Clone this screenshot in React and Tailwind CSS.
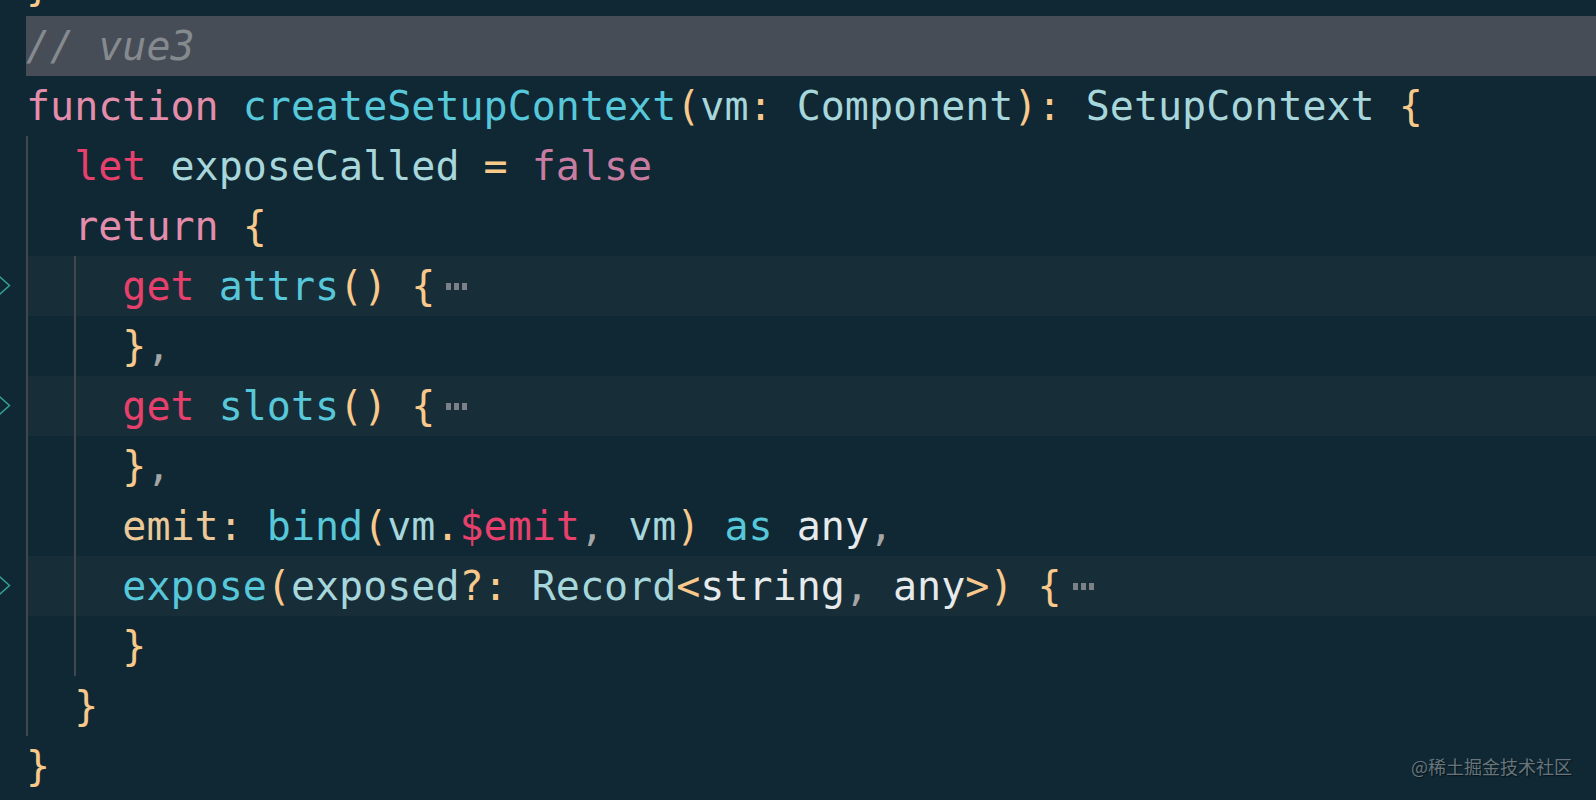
import React from 'react';

const C = {
  pink: 'text-[#e48dab]',
  red: 'text-[#e8406d]',
  mauve: 'text-[#c87c9f]',
  cyan: 'text-[#57c7da]',
  teal: 'text-[#a7d6db]',
  peach: 'text-[#f9c98c]',
  tan: 'text-[#ecc899]',
  white: 'text-[#e7eaeb]',
  grey: 'text-[#a3a5a7]',
  comment: 'text-[#858a8f] italic',
};

// each row: depth (indent guides), fold marker, row style, tokens
const rows = [
  { depth: 0, tokens: [['}', C.peach]] },
  { depth: 0, hl: true, tokens: [['// vue3', C.comment]] },
  {
    depth: 0,
    tokens: [
      ['function', C.pink], [' '], ['createSetupContext', C.cyan], ['(', C.peach], ['vm', C.teal],
      [':', C.peach], [' '], ['Component', C.teal], [')', C.peach], [':', C.peach], [' '],
      ['SetupContext', C.teal], [' '], ['{', C.peach],
    ],
  },
  { depth: 1, tokens: [['let', C.red], [' '], ['exposeCalled', C.teal], [' = ', C.peach], ['false', C.mauve]] },
  { depth: 1, tokens: [['return', C.pink], [' '], ['{', C.peach]] },
  { depth: 2, fold: true, tokens: [['get', C.red], [' '], ['attrs', C.cyan], ['()', C.peach], [' '], ['{', C.peach]] },
  { depth: 2, tokens: [['}', C.peach], [',', C.grey]] },
  { depth: 2, fold: true, tokens: [['get', C.red], [' '], ['slots', C.cyan], ['()', C.peach], [' '], ['{', C.peach]] },
  { depth: 2, tokens: [['}', C.peach], [',', C.grey]] },
  {
    depth: 2,
    tokens: [
      ['emit:', C.tan], [' '], ['bind', C.cyan], ['(', C.peach], ['vm', C.teal], ['.', C.peach],
      ['$emit', C.red], [',', C.grey], [' '], ['vm', C.teal], [')', C.peach], [' '], ['as', C.cyan],
      [' '], ['any', C.white], [',', C.grey],
    ],
  },
  {
    depth: 2,
    fold: true,
    tokens: [
      ['expose', C.cyan], ['(', C.peach], ['exposed', C.teal], ['?:', C.peach], [' '], ['Record', C.teal],
      ['<', C.peach], ['string', C.white], [',', C.grey], [' '], ['any', C.white], ['>', C.peach],
      [')', C.peach], [' '], ['{', C.peach],
    ],
  },
  { depth: 2, tokens: [['}', C.peach]] },
  { depth: 1, tokens: [['}', C.peach]] },
  { depth: 0, tokens: [['}', C.peach]], mark: true },
];

const Chevron = () => (
  <svg width="26" height="60" viewBox="0 0 26 60" className="block">
    <polyline points="-1,20 9.5,29.5 -1,39" fill="none" stroke="#35a092" strokeWidth="1.5" />
  </svg>
);

const Dots = () => (
  <span className="ml-[11px] flex gap-[3px] self-center">
    <span className="w-[5px] h-[7px] bg-[#7c8187]" />
    <span className="w-[5px] h-[7px] bg-[#7c8187]" />
    <span className="w-[5px] h-[7px] bg-[#7c8187]" />
  </span>
);

export default function App() {
  return (
    <div className="w-[1596px] h-[800px] overflow-hidden bg-[#0f2834] font-['DejaVu_Sans_Mono','Liberation_Mono',monospace] text-[40px]">
      <div className="mt-[-44px] flex flex-col">
        {rows.map((row, i) => (
          <div key={i} className="flex h-[60px] leading-[60px]">
            {/* gutter */}
            <div className="w-[26px] shrink-0">{row.fold && <Chevron />}</div>

            <div
              className={`flex flex-1 items-stretch whitespace-pre ${
                row.hl ? 'bg-[#474d57]' : row.fold ? 'bg-[#172d38]' : ''
              }`}
            >
              {Array.from({ length: row.depth }).map((_, d) => (
                <span key={d} className="w-[2ch] shrink-0 border-l-2 border-[#41474d]" />
              ))}
              {row.tokens.map(([t, cls], j) => (
                <span key={j} className={cls || ''}>
                  {t}
                </span>
              ))}
              {row.fold && <Dots />}

              {row.mark && (
                <span className="ml-auto mr-[24px] self-center leading-none text-[18px] text-[#68757c] [text-shadow:1px_1px_1px_#06141a] font-['Noto_Sans_CJK_SC',sans-serif]">
                  @稀土掘金技术社区
                </span>
              )}
            </div>
          </div>
        ))}
      </div>
    </div>
  );
}
